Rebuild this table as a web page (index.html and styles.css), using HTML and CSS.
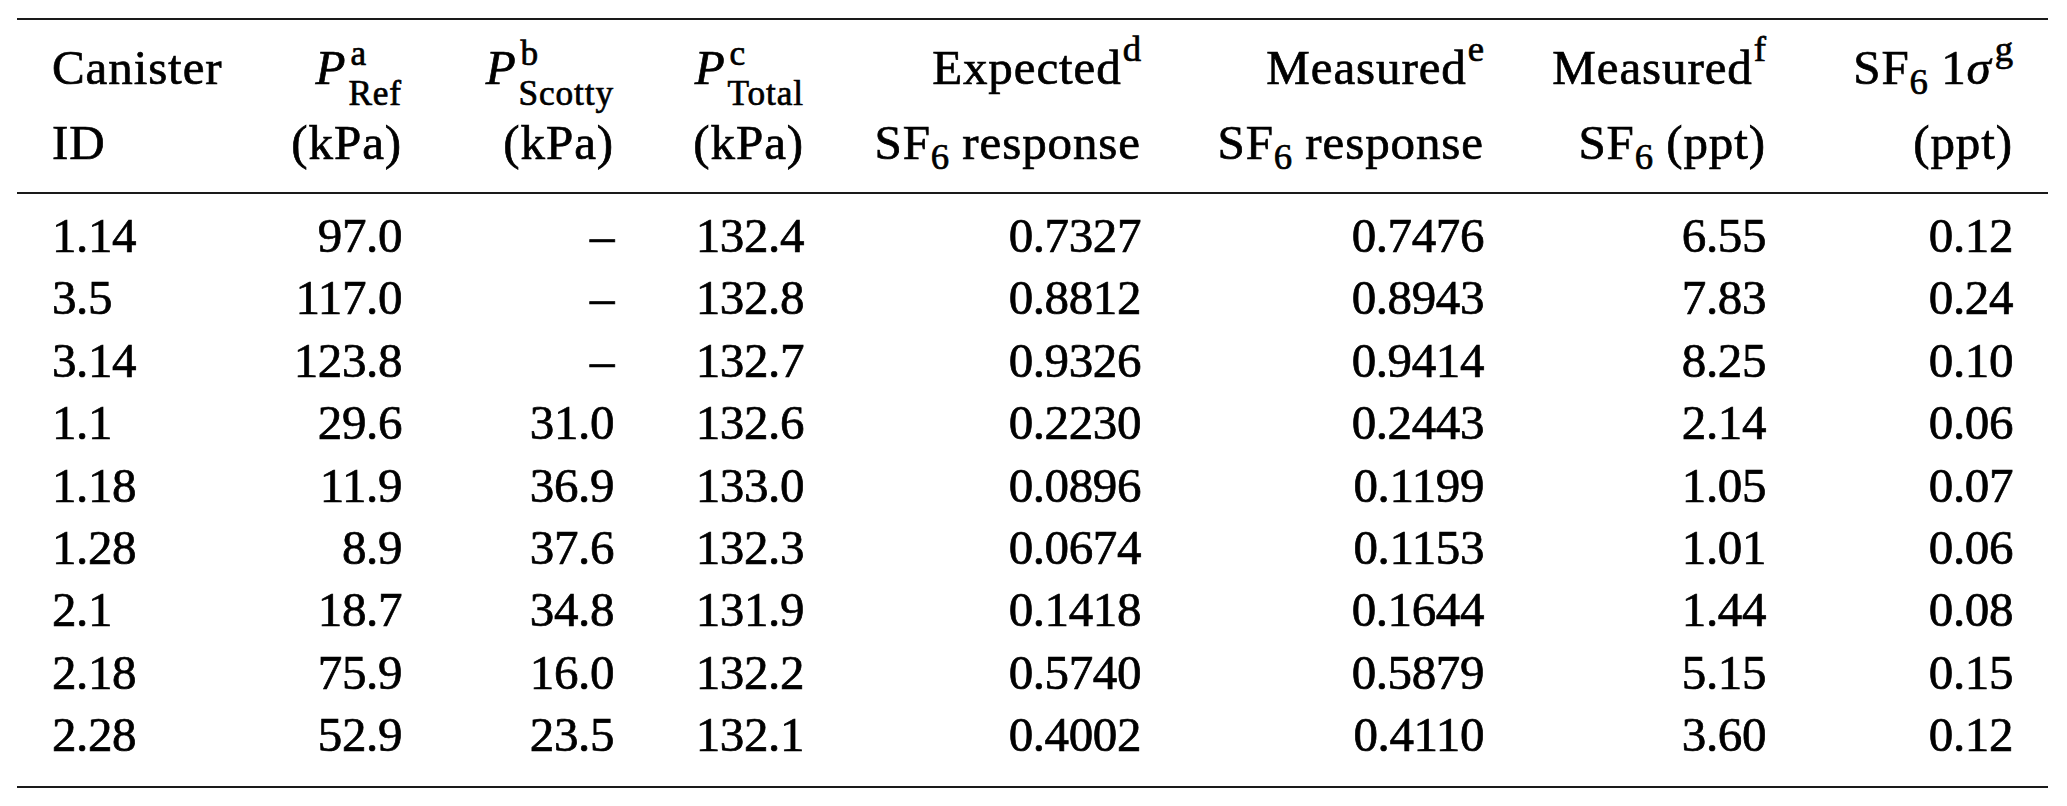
FILE: index.html
```html
<!DOCTYPE html>
<html>
<head>
<meta charset="utf-8">
<link rel="stylesheet" href="styles.css">
</head>
<body>
<table class="data">
  <colgroup>
    <col class="c1"><col class="c2"><col class="c3"><col class="c4"><col class="c5"><col class="c6"><col class="c7"><col class="c8">
  </colgroup>
  <thead>
    <tr class="h1">
      <th class="left">Canister</th>
      <th><i>P</i><span class="scripts"><span>a</span><span>Ref</span></span></th>
      <th><i>P</i><span class="scripts"><span>b</span><span>Scotty</span></span></th>
      <th><i>P</i><span class="scripts"><span>c</span><span>Total</span></span></th>
      <th>Expected<sup>d</sup></th>
      <th>Measured<sup>e</sup></th>
      <th>Measured<sup>f</sup></th>
      <th>SF<sub>6</sub> 1<i>σ</i><sup class="g">g</sup></th>
    </tr>
    <tr class="h2">
      <th class="left">ID</th>
      <th>(kPa)</th>
      <th>(kPa)</th>
      <th>(kPa)</th>
      <th>SF<sub>6</sub> response</th>
      <th>SF<sub>6</sub> response</th>
      <th>SF<sub>6</sub> (ppt)</th>
      <th>(ppt)</th>
    </tr>
  </thead>
  <tbody>
    <tr><td class="left">1.14</td><td>97.0</td><td>–</td><td>132.4</td><td>0.7327</td><td>0.7476</td><td>6.55</td><td>0.12</td></tr>
    <tr><td class="left">3.5</td><td>117.0</td><td>–</td><td>132.8</td><td>0.8812</td><td>0.8943</td><td>7.83</td><td>0.24</td></tr>
    <tr><td class="left">3.14</td><td>123.8</td><td>–</td><td>132.7</td><td>0.9326</td><td>0.9414</td><td>8.25</td><td>0.10</td></tr>
    <tr><td class="left">1.1</td><td>29.6</td><td>31.0</td><td>132.6</td><td>0.2230</td><td>0.2443</td><td>2.14</td><td>0.06</td></tr>
    <tr><td class="left">1.18</td><td>11.9</td><td>36.9</td><td>133.0</td><td>0.0896</td><td>0.1199</td><td>1.05</td><td>0.07</td></tr>
    <tr><td class="left">1.28</td><td>8.9</td><td>37.6</td><td>132.3</td><td>0.0674</td><td>0.1153</td><td>1.01</td><td>0.06</td></tr>
    <tr><td class="left">2.1</td><td>18.7</td><td>34.8</td><td>131.9</td><td>0.1418</td><td>0.1644</td><td>1.44</td><td>0.08</td></tr>
    <tr><td class="left">2.18</td><td>75.9</td><td>16.0</td><td>132.2</td><td>0.5740</td><td>0.5879</td><td>5.15</td><td>0.15</td></tr>
    <tr><td class="left">2.28</td><td>52.9</td><td>23.5</td><td>132.1</td><td>0.4002</td><td>0.4110</td><td>3.60</td><td>0.12</td></tr>
  </tbody>
</table>
</body>
</html>
```
FILE: styles.css
```css
html, body {
  margin: 0;
  padding: 0;
  background: #ffffff;
}

body {
  font-family: "Liberation Serif", "Times New Roman", serif;
  font-size: 49px;
  color: #000000;
  -webkit-text-stroke: 0.7px #000000;
}

.data {
  margin: 18px 0 0 17px;
  width: 2031px;
  table-layout: fixed;
  border-collapse: separate;
  border-spacing: 0;
  border-top: 2px solid #1a1a1a;
  border-bottom: 2px solid #1a1a1a;
}

.c1 { width: 233px; }
.c2 { width: 152px; }
.c3 { width: 212px; }
.c4 { width: 190px; }
.c5 { width: 337px; }
.c6 { width: 343px; }
.c7 { width: 282px; }
.c8 { width: 282px; }

th, td {
  padding: 0;
  text-align: right;
  font-weight: normal;
  white-space: nowrap;
  vertical-align: baseline;
}

th {
  letter-spacing: 0.9px;
}

td {
  letter-spacing: -0.4px;
}

th:first-child, td:first-child {
  padding-left: 35px;
}

th:last-child, td:last-child {
  padding-right: 35px;
}

.left {
  text-align: left;
}

thead th {
  line-height: 75px;
}

.h1 th {
  padding-top: 10px;
}

.h2 th {
  padding-bottom: 12px;
  border-bottom: 2px solid #1a1a1a;
}

tbody td {
  line-height: 62.4px;
}

tbody tr:first-child td {
  padding-top: 11px;
}

tbody tr:last-child td {
  padding-bottom: 19px;
}

i {
  font-style: italic;
}

sup, sub {
  font-size: 0.75em;
  line-height: 0;
  letter-spacing: 0;
}

sup {
  vertical-align: 23px;
  margin-left: 1px;
}

sub {
  vertical-align: -10px;
}

sup.g {
  margin-left: 3px;
}

.scripts {
  display: inline-block;
  font-size: 0.72em;
  line-height: 40px;
  vertical-align: -21px;
  margin-bottom: -28px;
  text-align: left;
  margin-left: 2px;
}

.scripts span {
  display: block;
}

.scripts span:first-child {
  padding-left: 2px;
}
```
